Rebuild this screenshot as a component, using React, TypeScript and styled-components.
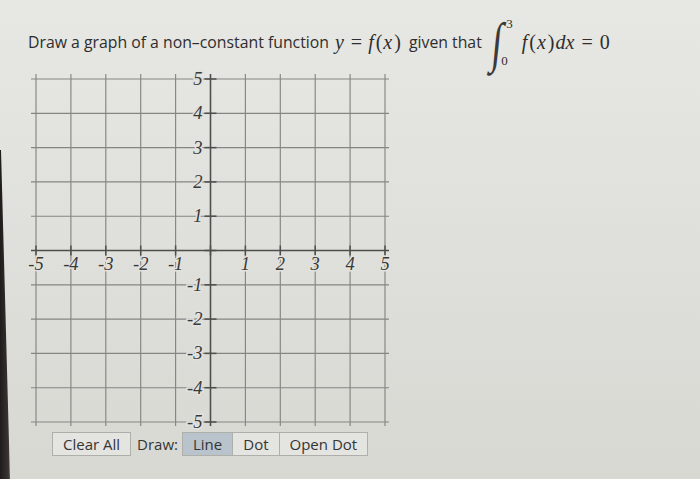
import React from "react";
import styled, { createGlobalStyle } from "styled-components";

const Global = createGlobalStyle`
  html, body { margin: 0; padding: 0; }
  body {
    width: 700px;
    height: 479px;
    overflow: hidden;
    background: linear-gradient(180deg, #e7e7e3 0%, #e0e0dc 45%, #d8d8d3 100%);
    font-family: "Open Sans", "Liberation Sans", sans-serif;
    color: #2e2e2e;
  }
`;

const Page = styled.div`
  position: relative;
  width: 700px;
  height: 479px;
  display: flex;
  flex-direction: column;
`;

const Bezel = styled.div`
  position: absolute;
  left: 0;
  top: 0;
  width: 12px;
  height: 479px;
  background: linear-gradient(90deg, #1f1b1a 0%, #3a3534 70%, #8d8a86 100%);
  clip-path: polygon(0 150px, 1px 150px, 10px 479px, 0 479px);
`;

const Prompt = styled.div`
  display: flex;
  align-items: center;
  height: 48px;
  padding: 18px 0 0 28px;
  font-size: 15.8px;
  white-space: nowrap;
`;

const Words = styled.span<{ $left?: number; $right?: number }>`
  margin-left: ${(p) => p.$left ?? 0}px;
  margin-right: ${(p) => p.$right ?? 0}px;
`;

const MathI = styled.span`
  font-family: "Liberation Serif", "DejaVu Serif", serif;
  font-style: italic;
  font-size: 20px;
  margin-right: 1px;
`;

const MathUp = styled.span<{ $space?: number }>`
  font-family: "Liberation Serif", "DejaVu Serif", serif;
  font-size: 20px;
  margin: 0 ${(p) => p.$space ?? 1}px;
`;

const IntegralBox = styled.span`
  display: inline-flex;
  align-items: stretch;
  height: 50px;
  margin: 0 9px 0 4px;
`;

const Sign = styled.span`
  font-family: "Liberation Serif", "DejaVu Serif", serif;
  font-size: 38px;
  line-height: 50px;
  display: inline-block;
  transform: scaleY(1.45) skewX(-8deg);
  color: #3a3a3a;
`;

const Limits = styled.span`
  display: flex;
  flex-direction: column;
  justify-content: space-between;
  font-family: "Liberation Serif", "DejaVu Serif", serif;
  font-size: 13px;
  line-height: 13px;
  padding: 0;
`;

const Lim = styled.span<{ $shift: number }>`
  margin-left: ${(p) => p.$shift}px;
`;

const Chart = styled.svg`
  display: block;
  margin-left: 20px;
  overflow: visible;
`;

const Toolbar = styled.div`
  display: flex;
  align-items: center;
  margin-top: 2px;
  padding-left: 52px;
  font-size: 15px;
  color: #353535;
`;

const Button = styled.button<{ $active?: boolean }>`
  font: inherit;
  color: inherit;
  height: 24px;
  padding: 0 10px;
  border: 1px solid #aeaeaa;
  background: ${(p) => (p.$active ? "#b9c3cb" : "#e4e4e0")};
  line-height: 20px;
  cursor: pointer;
`;

const DrawLabel = styled.span`
  margin: 0 4px 0 6px;
`;

const Segmented = styled.div`
  display: flex;
  & > ${Button} + ${Button} {
    border-left: none;
  }
`;

const W = 380;
const H = 364;
const X0 = 16; // x of -5 line
const Y0 = 13; // y of 5 line
const SX = 34.9;
const SY = 34.3;

const xs = Array.from({ length: 11 }, (_, i) => X0 + i * SX);
const ys = Array.from({ length: 11 }, (_, j) => Y0 + j * SY);
const axisX = xs[5];
const axisY = ys[5];

const Graph: React.FC = () => (
  <Chart width={W} height={H} viewBox={`0 0 ${W} ${H}`}>
    <g stroke="#858581" strokeWidth={1.15}>
      {xs.map((x, i) => (
        <line key={`v${i}`} x1={x} y1={Y0 - 5} x2={x} y2={ys[10] + 4} />
      ))}
      {ys.map((y, j) => (
        <line key={`h${j}`} x1={X0 - 5} y1={y} x2={xs[10] + 4} y2={y} />
      ))}
    </g>
    <g stroke="#4e4e4c" strokeWidth={1.5}>
      <line x1={X0 - 5} y1={axisY} x2={xs[10] + 4} y2={axisY} />
      <line x1={axisX} y1={Y0 - 5} x2={axisX} y2={ys[10] + 4} />
      {ys.map((y, j) => (
        <line key={`ty${j}`} x1={axisX - 6} y1={y} x2={axisX + 6} y2={y} />
      ))}
      {xs.map((x, i) => (
        <line key={`tx${i}`} x1={x} y1={axisY - 5} x2={x} y2={axisY + 5} />
      ))}
    </g>
    <g
      fontFamily='"Liberation Serif", "DejaVu Serif", serif'
      fontStyle="italic"
      fontSize={18.5}
      fill="#3a3a38"
      stroke="#e2e2de"
      strokeWidth={3}
      paintOrder="stroke"
    >
      {ys.map((y, j) =>
        j === 5 ? null : (
          <text key={`ly${j}`} x={axisX - 8} y={y + 6} textAnchor="end">
            {5 - j > 0 ? 5 - j : `-${j - 5}`}
          </text>
        )
      )}
      {xs.map((x, i) =>
        i === 5 ? null : (
          <text key={`lx${i}`} x={x} y={axisY + 19} textAnchor="middle">
            {i - 5 > 0 ? i - 5 : `-${5 - i}`}
          </text>
        )
      )}
    </g>
  </Chart>
);

export default function App() {
  return (
    <>
      <Global />
      <Page>
        <Bezel />
        <Prompt>
          <Words $right={6}>Draw a graph of a non–constant function</Words>
          <MathI>y</MathI>
          <MathUp $space={6}>=</MathUp>
          <MathI>f</MathI>
          <MathUp>(</MathUp>
          <MathI>x</MathI>
          <MathUp>)</MathUp>
          <Words $left={7} $right={6}>given that</Words>
          <IntegralBox>
            <Sign>∫</Sign>
            <Limits>
              <Lim $shift={4}>3</Lim>
              <Lim $shift={-1}>0</Lim>
            </Limits>
          </IntegralBox>
          <MathI>f</MathI>
          <MathUp>(</MathUp>
          <MathI>x</MathI>
          <MathUp>)</MathUp>
          <MathI>dx</MathI>
          <MathUp $space={6}>=</MathUp>
          <MathUp>0</MathUp>
        </Prompt>
        <Graph />
        <Toolbar>
          <Button>Clear All</Button>
          <DrawLabel>Draw:</DrawLabel>
          <Segmented>
            <Button $active>Line</Button>
            <Button>Dot</Button>
            <Button>Open Dot</Button>
          </Segmented>
        </Toolbar>
      </Page>
    </>
  );
}
